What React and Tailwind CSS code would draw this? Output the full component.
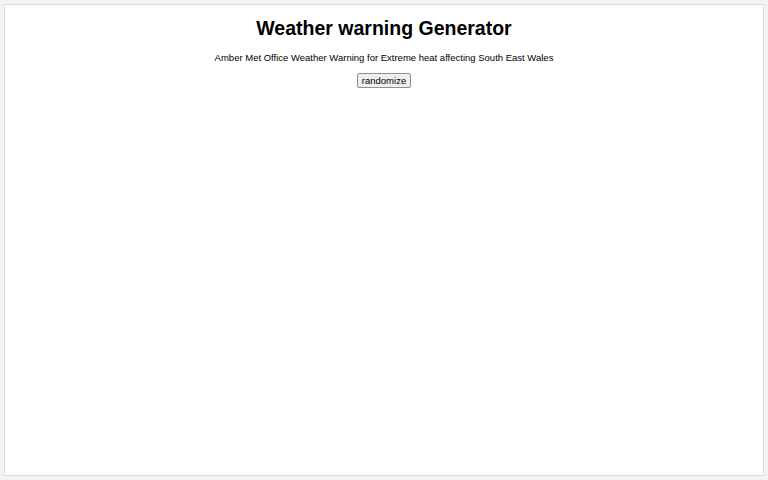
export default function App() {
  return (
    <div className="h-screen w-full bg-[#f4f4f4] p-[4px]" style={{ fontFamily: '"Liberation Sans", Arial, sans-serif' }}>
      <div className="h-full w-full bg-white border border-[#dcdcdc] flex flex-col items-center">
        <h1 className="mt-[11px] text-[19.5px] font-bold text-black leading-[24px]">Weather warning Generator</h1>
        <p className="mt-[12px] text-[9.5px] leading-[12px] text-black">
          Amber Met Office Weather Warning for Extreme heat affecting South East Wales
        </p>
        <button className="mt-[9px] px-[4px] h-[15px] text-[9.5px] leading-[12px] text-black bg-[#efefef] border border-[#8f8f8f] rounded-[2px]">
          randomize
        </button>
      </div>
    </div>
  );
}
